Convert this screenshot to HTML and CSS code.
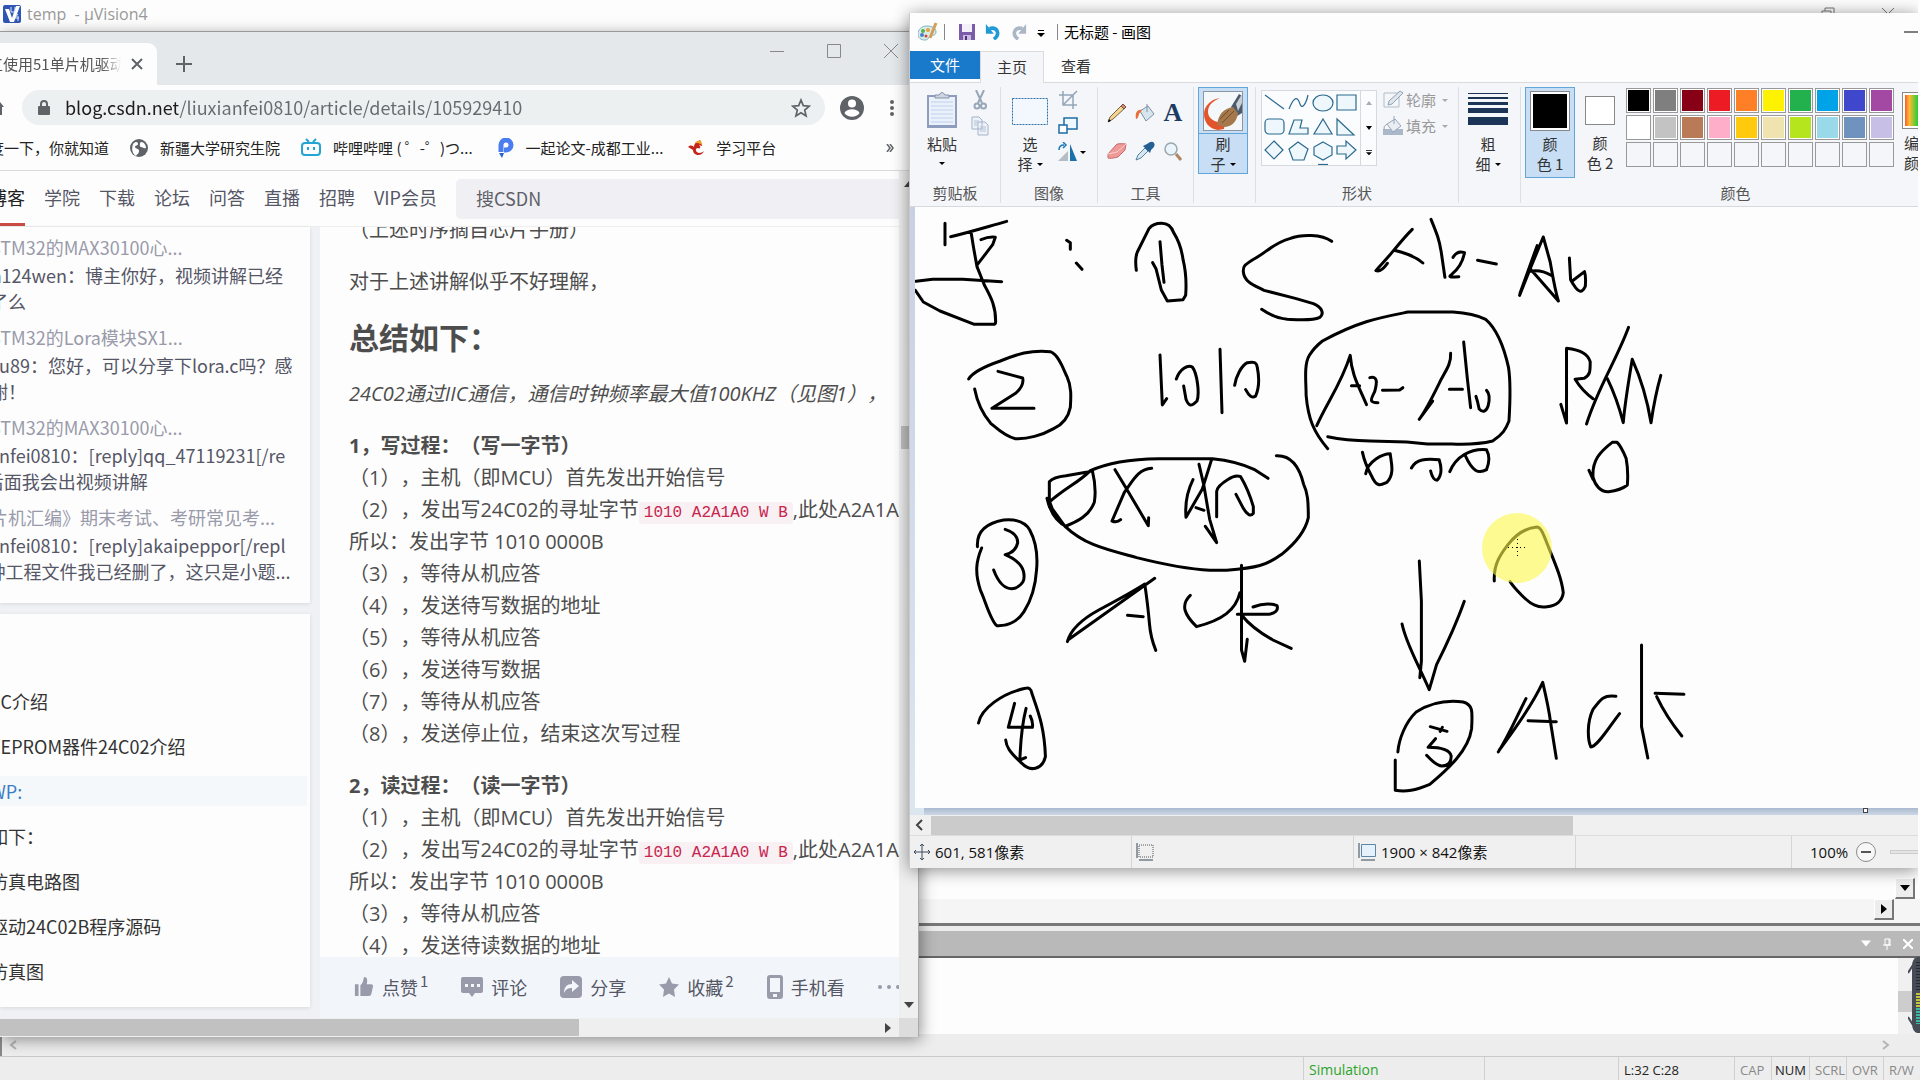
FILE: index.html
```html
<!DOCTYPE html>
<html lang="zh-CN">
<head>
<meta charset="utf-8">
<title>temp - µVision4</title>
<link rel="stylesheet" href="styles.css">
</head>
<body>
<main class="desktop">

<!-- µVision, the maximised window at the back -->
<section class="uv">
  <header class="uv-title">
    <svg class="uv-logo" viewBox="0 0 18 18"><rect width="18" height="18" rx="2" fill="#2f55b5"/><path d="M2 4h4l3 9 4-12h4l-6 16H7z" fill="#fff"/><path d="M8 2v5h4V2M15 9l-3 4h4M15 11v5" fill="none" stroke="#dfe8ff" stroke-width="1"/></svg>
    <h1 class="uv-name">temp &nbsp;- µVision4</h1>
    <span class="uv-controls">
      <svg viewBox="0 0 14 14"><path d="M1 4h9v9H1zM4 4V1h9v9h-3" fill="none" stroke="#777"/></svg>
      <svg viewBox="0 0 14 14"><path d="M1 1l12 12M13 1L1 13" fill="none" stroke="#777"/></svg>
    </span>
  </header>
  <div class="uv-editor">
    <button class="uv-arrow" aria-label="向下滚动"><svg viewBox="0 0 10 6"><path d="M0 0h10L5 6z"/></svg></button>
  </div>
  <div class="uv-hscroll">
    <button class="uv-arrow" aria-label="向右滚动"><svg class="side" viewBox="0 0 6 10"><path d="M0 0v10l6-5z"/></svg></button>
  </div>
  <div class="uv-dock">
    <svg viewBox="0 0 10 6" class="ic-drop"><path d="M0 0h10L5 6z" fill="#fff"/></svg>
    <svg viewBox="0 0 10 12" class="ic-pin"><path d="M3 1h5v6H3zM1 7h8M5 7v5M7 1v6" fill="none" stroke="#fff"/></svg>
    <svg viewBox="0 0 10 10" class="ic-x"><path d="M0 0l10 10M10 0L0 10" stroke="#fff" stroke-width="2"/></svg>
  </div>
  <div class="uv-output"><div class="uv-vscroll"><i></i></div></div>
  <div class="uv-outscroll">
    <svg viewBox="0 0 8 10"><path d="M7 1L2 5l5 4" fill="none" stroke="#b5b5b5" stroke-width="2"/></svg>
    <svg viewBox="0 0 8 10" class="right"><path d="M1 1l5 4-5 4" fill="none" stroke="#b5b5b5" stroke-width="2"/></svg>
  </div>
  <footer class="uv-status">
    <span class="cell sim">Simulation</span><span class="cell blank"></span><span class="cell pos">L:32 C:28</span><span class="cell off">CAP</span><span class="cell num">NUM</span><span class="cell off">SCRL</span><span class="cell off">OVR</span><span class="cell off">R/W</span>
  </footer>
  <svg class="meter" viewBox="0 0 12 76"><path d="M12 0H9Q4 2 4 9v57q0 8 5 10h3z" fill="#474b55"/><path d="M5 8L0 16M5 68L0 60" stroke="#474b55" stroke-width="2"/><path d="M10 5v30" stroke="#262a33" stroke-width="4" stroke-dasharray="1 2"/><path d="M10 36v14" stroke="#c2c43c" stroke-width="4" stroke-dasharray="2 1"/><path d="M10 51v16" stroke="#38b9a0" stroke-width="4" stroke-dasharray="2 1"/></svg>
</section>

<!-- Browser -->
<section class="browser">
  <div class="tabstrip">
    <div class="tab"><span class="tab-title">工使用51单片机驱动</span><button class="plain" aria-label="关闭标签页"><svg class="s12" viewBox="0 0 12 12"><path d="M1 1l10 10M11 1L1 11" stroke="#5f6368" stroke-width="2"/></svg></button></div>
    <button class="plain newtab" aria-label="新标签页"><svg class="s16" viewBox="0 0 16 16"><path d="M8 0v16M0 8h16" stroke="#5f6368" stroke-width="2"/></svg></button>
    <div class="win-controls">
      <button class="plain" aria-label="最小化"><svg class="s14" viewBox="0 0 14 14"><path d="M0 7.5h14" stroke="#888"/></svg></button>
      <button class="plain" aria-label="最大化"><svg class="s14" viewBox="0 0 14 14"><path d="M.5.5h13v13H.5z" fill="none" stroke="#888"/></svg></button>
      <button class="plain" aria-label="关闭"><svg class="s14" viewBox="0 0 14 14"><path d="M0 0l14 14M14 0L0 14" stroke="#888"/></svg></button>
    </div>
  </div>
  <div class="toolbar">
    <svg class="home" viewBox="0 0 4 14"><path d="M0 1l4 5H2v8H0z" fill="#5f6368"/></svg>
    <label class="omnibox">
      <svg class="lock" viewBox="0 0 12 15"><path d="M3 7V4a3 3 0 016 0v3" fill="none" stroke="#5f6368" stroke-width="2"/><rect y="6" width="12" height="9" rx="1" fill="#5f6368"/></svg>
      <input class="url" type="text" aria-label="地址" value="blog.csdn.net/liuxianfei0810/article/details/105929410">
      <svg class="star" viewBox="0 0 20 20"><path d="M10 2l2.3 5.600 6 .5-4.600 4 1.400 5.900L10 14.800 4.900 18l1.400-5.900-4.600-4 6-.5z" fill="none" stroke="#5f6368" stroke-width="1.700"/></svg>
    </label>
    <svg class="avatar" viewBox="0 0 24 24"><circle cx="12" cy="12" r="12" fill="#5f6368"/><circle cx="12" cy="7.500" r="4" fill="#fff"/><path d="M4.500 17c2-5 13-5 15 0-3 5-12 5-15 0z" fill="#fff"/></svg>
    <svg class="dots" viewBox="0 0 4 18"><circle cx="2" cy="3" r="2"/><circle cx="2" cy="9" r="2"/><circle cx="2" cy="15" r="2"/></svg>
  </div>
  <nav class="bookmarks">
    <a href="#b1" class="first">度一下，你就知道</a>
    <a href="#b2"><svg class="s18" viewBox="0 0 18 18"><circle cx="9" cy="9" r="9" fill="#5f6368"/><path d="M3 5c3-3 5-2 5 0s-3 1-3 3 4 1 4 4-2 3-3 5c-3-2-5-6-3-12zM11 3c3 0 5 3 5 6-2 1-3-1-5-1s-1-5 0-5z" fill="#fff"/></svg>新疆大学研究生院</a>
    <a href="#b3" class="cut"><svg class="s20" viewBox="0 0 20 20"><path d="M5 1l3 3M15 1l-3 3" stroke="#23a5d3" stroke-width="2"/><rect x="1" y="5" width="18" height="12" rx="3" fill="none" stroke="#23a5d3" stroke-width="2"/><path d="M7 9v3M13 9v3" stroke="#23a5d3" stroke-width="2"/></svg>哔哩哔哩 (&nbsp;゜-゜)つ...</a>
    <a href="#b4" class="cut"><svg class="p-logo" viewBox="0 0 16 20"><path d="M3 14V7a5 5 0 115 5H6" fill="none" stroke="#4a7df0" stroke-width="5"/><path d="M1 15h5l-2 5z" fill="#2b62cf"/></svg>一起论文-成都工业...</a>
    <a href="#b5"><svg class="s16" viewBox="0 0 16 16"><path d="M0 7c3-3 5-1 6 0 0-4 4-6 6-7-1 3 3 3 2 6l-3-1c3 3 0 4-1 3-3 0-3 4 1 5 2 0 4-1 5-2-2 6-11 5-11-1-2-1-3-2-5-3z" fill="#c5261c"/><path d="M7 3c2-3 4-1 6-3 0 3 2 3 1 5-3-2-4-2-7-2z" fill="#eda72e"/></svg>学习平台</a>
    <button class="plain more" aria-label="更多书签"><svg viewBox="0 0 8 8"><path d="M1 0l3 4-3 4M4 0l3 4-3 4" fill="none" stroke="#5f6368" stroke-width="1.500"/></svg></button>
  </nav>

  <div class="viewport">
    <div class="page">
      <nav class="csdn-nav">
        <a href="#n1" class="on">博客</a><a href="#n2">学院</a><a href="#n3">下载</a><a href="#n4">论坛</a><a href="#n5">问答</a><a href="#n6">直播</a><a href="#n7">招聘</a><a href="#n8">VIP会员</a>
        <input type="text" class="search" aria-label="搜索" placeholder="搜CSDN">
      </nav>
      <div class="columns">
        <aside class="side-col">
          <ul class="card comments">
            <li><a href="#c1">基于STM32的MAX30100心...</a><p>karen124wen：博主你好，视频讲解已经<br>更新了么</p></li>
            <li><a href="#c2">基于STM32的Lora模块SX1...</a><p>xiaoliu89：您好，可以分享下lora.c吗？感<br>激谢谢！</p></li>
            <li><a href="#c3">基于STM32的MAX30100心...</a><p>liuxianfei0810：[reply]qq_47119231[/re<br>ply]后面我会出视频讲解</p></li>
            <li><a href="#c4">《单片机汇编》期末考试、考研常见考...</a><p>liuxianfei0810：[reply]akaipeppor[/repl<br>y]一种工程文件我已经删了，这只是小题...</p></li>
          </ul>
          <ul class="card toc">
            <li><a href="#t1">一、IIC介绍</a></li>
            <li><a href="#t2">二、EEPROM器件24C02介绍</a></li>
            <li class="active"><a href="#t3">三、WP:</a></li>
            <li><a href="#t4">总结如下：</a></li>
            <li><a href="#t5">四、仿真电路图</a></li>
            <li><a href="#t6">五、驱动24C02B程序源码</a></li>
            <li><a href="#t7">六、仿真图</a></li>
          </ul>
        </aside>
        <div class="main-col">
          <article class="article">
            <p>（上述时序摘自芯片手册）</p>
            <p>对于上述讲解似乎不好理解，</p>
            <h2>总结如下：</h2>
            <p><em>24C02通过IIC通信，通信时钟频率最大值100KHZ（见图1），</em></p>
            <p><strong>1，写过程：（写一字节）</strong><br>（1），主机（即MCU）首先发出开始信号<br>（2），发出写24C02的寻址字节<code>1010 A2A1A0 W B</code>,此处A2A1A0<br>所以：发出字节 1010 0000B<br>（3），等待从机应答<br>（4），发送待写数据的地址<br>（5），等待从机应答<br>（6），发送待写数据<br>（7），等待从机应答<br>（8），发送停止位，结束这次写过程</p>
            <p><strong>2，读过程：（读一字节）</strong><br>（1），主机（即MCU）首先发出开始信号<br>（2），发出写24C02的寻址字节<code>1010 A2A1A0 W B</code>,此处A2A1A0<br>所以：发出字节 1010 0000B<br>（3），等待从机应答<br>（4），发送待读数据的地址</p>
          </article>
          <div class="actions">
            <button class="plain"><svg viewBox="0 0 20 22" class="s20"><path d="M0 8h4v13H0zM6 9c3-2 3-5 4-9 4 0 4 4 3 8h5q2 0 2 2l-2 9q0 2-3 2H6z"/></svg>点赞<sup>1</sup></button>
            <button class="plain"><svg viewBox="0 0 22 20" class="s22"><path d="M2 0h18q2 0 2 2v12q0 2-2 2h-6l-3 4-3-4H2q-2 0-2-2V2q0-2 2-2z"/><path d="M4 7h3v3H4zM10 7h3v3h-3zM16 7h3v3h-3z" fill="#f3f6fa"/></svg>评论</button>
            <button class="plain"><svg viewBox="0 0 22 22" class="s22"><rect width="22" height="22" rx="4"/><path d="M4 17c0-6 3-9 8-9V4l7 6-7 6v-4c-4 0-6 1-8 5z" fill="#f3f6fa"/></svg>分享</button>
            <button class="plain"><svg viewBox="0 0 20 20" class="s20"><path d="M10 0l3 6.500 7 1-5 5 1 7.500-6-3.500L4 20l1-7.500-5-5 7-1z"/></svg>收藏<sup>2</sup></button>
            <button class="plain"><svg viewBox="0 0 16 24" class="phone"><path fill-rule="evenodd" d="M3 0h10q3 0 3 3v18q0 3-3 3H3q-3 0-3-3V3q0-3 3-3zM3 3v14h10V3zM6 19v3h4v-3z"/></svg>手机看</button>
            <button class="plain" aria-label="更多"><svg viewBox="0 0 22 4" class="dots3"><circle cx="2" cy="2" r="2"/><circle cx="11" cy="2" r="2"/><circle cx="20" cy="2" r="2"/></svg></button>
          </div>
        </div>
      </div>
    </div>
    <div class="vbar"><svg viewBox="0 0 10 6"><path d="M0 6h10L5 0z"/></svg><i></i><svg viewBox="0 0 10 6"><path d="M0 0h10L5 6z"/></svg></div>
    <div class="hbar"><i></i><svg viewBox="0 0 6 10"><path d="M0 0v10l6-5z"/></svg></div>
    <div class="corner"></div>
  </div>
</section>

<!-- Paint -->
<section class="paint">
  <header class="p-title">
    <svg class="s20" viewBox="0 0 20 20"><path d="M9 4C3 4 0 8 0 12s3 6 7 6 3-3 5-4 6 0 6-4-4-6-9-6z" fill="#d9ecec" stroke="#7fb4bd"/><circle cx="5" cy="9" r="2" fill="#5cae4b"/><circle cx="10" cy="8" r="2" fill="#e8a13c"/><circle cx="4" cy="13" r="2" fill="#4a7fd0"/><circle cx="8" cy="14" r="1.500" fill="#d3452f"/><path d="M18 1L12 16" stroke="#d3a059" stroke-width="3"/></svg>
    <i class="bar"></i>
    <svg class="s16 save" viewBox="0 0 16 16"><path d="M0 0h16v16H0z" fill="#7a5ca8"/><path d="M3 0h10v8H3z" fill="#f3f0fa"/><path d="M4 11h8v5H4z" fill="#c9bce0"/><path d="M6 12h2v4H6z" fill="#4b3477"/></svg>
    <svg class="s16" viewBox="0 0 16 18"><path d="M4 5c10-2 12 7 5 12" fill="none" stroke="#1f9ad6" stroke-width="4"/><path d="M0 0v11h9z" fill="#1f9ad6"/></svg>
    <svg class="s16" viewBox="0 0 16 18"><path d="M12 5C2 3 0 12 7 17" fill="none" stroke="#a9b7c6" stroke-width="4"/><path d="M16 0v11H7z" fill="#a9b7c6"/></svg>
    <svg class="qat" viewBox="0 0 8 7"><path d="M1 0h6v1H1zM0 3h8L4 7z"/></svg>
    <i class="bar"></i>
    <span class="p-name">无标题 - 画图</span>
    <button class="plain min" aria-label="最小化"><svg viewBox="0 0 14 2"><path d="M0 1h14" stroke="#000"/></svg></button>
  </header>
  <nav class="p-tabs"><button class="file">文件</button><button class="cur">主页</button><button>查看</button></nav>
  <div class="ribbon">
    <div class="group g-clip">
      <div class="g-body">
        <button class="tall"><svg class="i30x40" viewBox="0 0 30 40"><path d="M0 4h30v33H0z" fill="#8e9dbd"/><path d="M2 6h26v28H2z" fill="#eaf1fb"/><path d="M8 7V4h4q3-5 6 0h4v3z" fill="#cfd5df" stroke="#8391ab"/><path d="M4 11h22M4 15h22M4 19h22M4 23h22M4 27h22M4 31h22" stroke="#bfd0ec"/></svg><span>粘贴</span><svg class="dn" viewBox="0 0 6 3"><path d="M0 0h6L3 3z"/></svg></button>
        <div class="stack">
          <button class="plain" aria-label="剪切"><svg class="s20" viewBox="0 0 20 20"><path d="M6 0l6 13M14 0L8 13" stroke="#98a6ba" stroke-width="2"/><circle cx="7" cy="16" r="2.500" fill="none" stroke="#98a6ba" stroke-width="2"/><circle cx="13.500" cy="16" r="2.500" fill="none" stroke="#98a6ba" stroke-width="2"/></svg></button>
          <button class="plain" aria-label="复制"><svg class="s20" viewBox="0 0 20 20"><path d="M2 1h7l3 3v9H2zM8 6h7l3 3v10H8z" fill="#eef2f8" stroke="#a5b3c9"/><path d="M4 5h5M4 7h4M4 9h3M10 11h6M10 13h6M10 15h6" stroke="#b6c2d6"/></svg></button>
        </div>
      </div>
      <div class="g-label">剪贴板</div>
    </div>
    <div class="group g-image">
      <div class="g-body">
        <button class="tall"><svg class="i36x40" viewBox="0 0 36 40"><rect x=".5" y="7.500" width="35" height="26" fill="#f2f8fd" stroke="#2a6fa8" stroke-dasharray="2 1"/></svg><span>选<br>择<svg class="dn" viewBox="0 0 6 3"><path d="M0 0h6L3 3z"/></svg></span></button>
        <div class="stack wide">
          <button class="plain" aria-label="裁剪"><svg class="s20" viewBox="0 0 20 20"><path d="M5 1v14h14M1 5h14v14M5 15L19 1" fill="none" stroke="#93a5b9" stroke-width="1.500"/></svg></button>
          <button class="plain" aria-label="重新调整大小"><svg class="s20" viewBox="0 0 20 20"><path d="M6 2h13v11H6z" fill="#f0f9ff" stroke="#1c6da3" stroke-width="1.500"/><path d="M1 9h8v8H1z" fill="#fff" stroke="#1c6da3" stroke-width="1.500"/></svg></button>
          <button class="plain" aria-label="旋转"><svg class="i28x20" viewBox="0 0 28 20"><path d="M12 2v17h7z" fill="#1a70ab"/><path d="M10 9v10H0z" fill="#b4bcc5"/><path d="M1 8q0-5 5-5M5 0l3 3-3 3" fill="none" stroke="#1a78b8" stroke-width="1.500"/><path d="M22 9h6l-3 3z"/></svg></button>
        </div>
      </div>
      <div class="g-label">图像</div>
    </div>
    <div class="group g-tools">
      <div class="g-body tools">
        <button class="plain" aria-label="铅笔"><svg class="s20" viewBox="0 0 20 20"><path d="M1 19l2-5L15 2l3 3L6 16z" fill="#f3d68b" stroke="#77624a"/><path d="M14 3l2-2 3 3-2 2z" fill="#d98a70" stroke="#705040"/><path d="M1 19l1-3 2 2z"/></svg></button>
        <button class="plain" aria-label="填充"><svg class="s20" viewBox="0 0 20 20"><path d="M5 8l8-5 6 8-8 7z" fill="#d7e5ef" stroke="#7d92a4"/><path d="M12 1v8" stroke="#7d92a4"/><path d="M7 7C2 6 0 10 1 16q2 0 3-5z" fill="#e6703a"/></svg></button>
        <button class="plain letter" aria-label="文本">A</button>
        <button class="plain" aria-label="橡皮擦"><svg class="s20" viewBox="0 0 20 20"><path d="M1 13L9 4q1-2 10-1l-1 6-7 7q-8 2-10 1z" fill="#ef9a98" stroke="#c76b6b"/><path d="M1 13l9-2 9-8" fill="none" stroke="#fbd0cc"/></svg></button>
        <button class="plain" aria-label="颜色选取器"><svg class="s20" viewBox="0 0 20 20"><path d="M1 19l2-5 7-7 3 3-7 7z" fill="#d7e7f2" stroke="#59819b"/><path d="M8 5l7 7 1-3q5-4 3-7t-7 1z" fill="#245f94"/></svg></button>
        <button class="plain" aria-label="放大镜"><svg class="s20" viewBox="0 0 20 20"><circle cx="8" cy="8" r="6" fill="#eaf4fb" stroke="#9ba6af" stroke-width="1.500"/><path d="M13 13l5 6" stroke="#b08562" stroke-width="3"/></svg></button>
      </div>
      <div class="g-label">工具</div>
    </div>
    <div class="group g-brush">
      <div class="g-body"><button class="tall pressed split"><svg class="i40x40" viewBox="0 0 40 40"><rect x=".5" y=".5" width="39" height="39" fill="#f5f8fa" stroke="#8a97a5"/><path d="M17 7C8 8 1 15 1 23c0 8 5 15 14 16l6-1 1-7c-6 2-17-2-17-10C5 14 10 10 17 7z" fill="#e2552c"/><path d="M28 16l8-13 3 2v17l-5 3z" fill="#4d5a6c"/><path d="M33 13l6-10v9l-4 8z" fill="#c7ced6"/><path d="M14 34q2-16 16-18l5 6q-2 13-13 14z" fill="#a4784a"/><path d="M19 32l12-12M17 28l9-9" stroke="#70502f"/></svg><span>刷<br>子<svg class="dn" viewBox="0 0 6 3"><path d="M0 0h6L3 3z"/></svg></span></button></div>
      <div class="g-label"></div>
    </div>
    <div class="group g-shapes">
      <div class="g-body">
        <div class="gallery">
          <svg class="shapes" viewBox="0 0 98 74" fill="#eef7fc" stroke="#2b6a8e" stroke-width="1.200"><path d="M3 4l19 14"/><path fill="none" d="M27 18c6-15 9-11 11-5s6 0 8-9"/><ellipse cx="61" cy="12" rx="10" ry="8"/><path d="M75 4h19v15H75z"/><rect x="3" y="28" width="19" height="15" rx="4"/><path d="M27 43l5-14h8l-2 8h8v6z"/><path d="M61 28l9 15H52z"/><path d="M75 28l17 16H75z"/><path d="M12 50l9 9-9 9-9-9z"/><path d="M36 51l10 7-4 11H31l-4-11z"/><path d="M61 51l9 5v8l-9 5-9-5v-8z"/><path d="M75 55h9v-5l10 9-10 9v-5h-9z"/><path d="M56 73.500h10"/></svg>
          <div class="g-scroll"><svg viewBox="0 0 6 4"><path d="M0 4h6L3 0z" fill="#a8adb3"/></svg><svg viewBox="0 0 6 4"><path d="M0 0h6L3 4z"/></svg><svg viewBox="0 0 8 8"><path d="M0 0h8v1H0zM0 3h8L4 7z"/></svg></div>
        </div>
        <div class="stack opts">
          <button class="plain"><svg class="s20" viewBox="0 0 20 20"><path d="M1 3h15v14H1z" fill="none" stroke="#b3bdc9"/><path d="M5 15l1-4L17 1l3 2L9 14z" fill="#dfe5ec" stroke="#93a1b1"/></svg>轮廓<svg class="dn" viewBox="0 0 6 3"><path d="M0 0h6L3 3z"/></svg></button>
          <button class="plain"><svg class="s20" viewBox="0 0 20 20"><path d="M0 13h20v6H0z" fill="#aab8ca"/><path d="M4 8l8-5 6 7-8 6z" fill="#e9eef4" stroke="#97a6b8"/><path d="M11 0v8M4 8q-4 2-3 6" fill="none" stroke="#97a6b8"/></svg>填充<svg class="dn" viewBox="0 0 6 3"><path d="M0 0h6L3 3z"/></svg></button>
        </div>
      </div>
      <div class="g-label">形状</div>
    </div>
    <div class="group g-size">
      <div class="g-body"><button class="tall"><svg class="i40x40" viewBox="0 0 40 40"><path d="M0 2h40v1H0zM0 6h40v2H0zM0 11h40v3H0zM0 17h40v5H0zM0 26h40v8H0z" fill="#1c3557"/></svg><span>粗<br>细<svg class="dn" viewBox="0 0 6 3"><path d="M0 0h6L3 3z"/></svg></span></button></div>
      <div class="g-label"></div>
    </div>
    <div class="group g-colors">
      <div class="g-body">
        <button class="tall pressed"><i class="chip big"></i><span>颜<br>色 1</span></button>
        <button class="tall second"><i class="chip small"></i><span>颜<br>色 2</span></button>
        <div class="palette">
          <button class="k" aria-label="黑色"></button><button class="gray50" aria-label="灰色"></button><button class="darkred" aria-label="深红"></button><button class="red" aria-label="红"></button><button class="orange" aria-label="橙"></button><button class="yellow" aria-label="黄"></button><button class="green" aria-label="绿"></button><button class="turq" aria-label="青绿"></button><button class="indigo" aria-label="靛蓝"></button><button class="purple" aria-label="紫"></button>
          <button class="w" aria-label="白色"></button><button class="gray25" aria-label="浅灰"></button><button class="brown" aria-label="褐"></button><button class="rose" aria-label="玫瑰"></button><button class="gold" aria-label="金"></button><button class="cream" aria-label="浅黄"></button><button class="lime" aria-label="酸橙"></button><button class="sky" aria-label="淡青绿"></button><button class="steel" aria-label="蓝灰"></button><button class="lavender" aria-label="淡紫"></button>
          <button class="empty" aria-label="空"></button><button class="empty" aria-label="空"></button><button class="empty" aria-label="空"></button><button class="empty" aria-label="空"></button><button class="empty" aria-label="空"></button><button class="empty" aria-label="空"></button><button class="empty" aria-label="空"></button><button class="empty" aria-label="空"></button><button class="empty" aria-label="空"></button><button class="empty" aria-label="空"></button>
        </div>
        <button class="tall edit"><i class="chip rainbow"></i><span>编辑<br>颜色</span></button>
      </div>
      <div class="g-label">颜色</div>
    </div>
  </div>

  <div class="work">
    <div class="canvas">
      <svg class="ink" viewBox="915 207 1003 601">
        <g transform="translate(910 205) scale(.33333)">
          <path d="M105 55v64M122 95c60-14 110-30 168-46M183 80l8 50 10 55 22 55c22 40 34 65 34 110q0 8-8 8H193L90 318 40 291 16 256M213 104q25-10 43-7l-8 22-46 60M18 229l50-6h90l117 7M470 106l11 7v20M499 174l17 19"/>
          <path d="M679 196q-5-35 3-55l35-70q12-16 38-16t36 28q22 35 28 80c10 40 10 80 8 108l-8 13-47 4-18-33-16-64-10-18M750 110l6 70 6 52M1265 109c-30-22-90-22-126-8-50 14-70 42-112 64-25 16-28 20-27 35 2 32 35 42 62 56l94 24 54 16c25 10 35 30 18 42-20 10-70 6-96 5-25-2-55-15-77-30"/>
          <path d="M176 522c15-25 60-42 95-54 50-20 90-34 150-28 25 8 40 55 50 75 14 30 12 60 10 92-6 30-20 50-50 64-35 20-80 32-115 30-30-6-55-30-74-46-25-30-40-60-48-103M264 499l74 20q5 22-20 45l-72 46h126M750 450l7 150 13-19M799 522c10-30 35-44 48-36 15 20 22 80 14 102-18 18-25 16-33-5l-7-40M930 433l6 190M974 541c5-30 20-58 38-68 22-4 28 0 30 15 6 30 6 60-5 85-10 8-20 0-30-19"/>
          <path d="M547 797c10 40 10 70 6 95-15 40-50 58-88 72l-38-52-9-24M418 905v-75q12-14 50-18l60-10 20-5M416 893c50-45 90-60 125-96M541 797c60-28 140-35 206-36h160c60 6 100 20 125 32l42 27M465 964c60 56 120 68 215 94 80 20 150 34 220 38h50c90-8 120-15 165-48 40-32 70-65 80-110 0-50-2-75-14-100-12-50-36-88-82-86M411 880q15 65 60 86M615 794l30 50 70 118 1-24M725 790c-40 2-55 35-82 72l-37 86q15 6 26-4M849 824c-15 30-25 65-21 113l49-85 27-86M867 778l14 60 18 105 21 70-34-49M858 908l24 8M920 935v-76q2-16 35-36 20-14 37-8 24 40 38 90v20q-12 15-30-15l-22-42"/>
        </g>
        <g transform="translate(1280 205) scale(.40816 .33333)">
          <path d="M324 73q-18 22-46 64c-20 30-30 40-43 60q12 6 28-22M280 136q48 14 70 38M370 43c15 45 20 60 25 98l9 76M424 157q10-22 28-14c-4 28-14 48-32 66-10 8 0 8 18 6M484 166l46 11M587 271l26-80 32-95 17 75c8 55 12 85 20 117l-32-45-36-50M588 265l42-143M612 199q28-6 52 12M709 159l3 65c20 45 28 40 36 20q2-30-2-44l-30 28"/>
          <path d="M117 731c-35-50-48-90-53-160 0-40-6-92 8-120q12-24 32-43c90-60 140-70 210-87h110q50 4 80 22c30 32 45 84 56 145 6 50 4 100 1 160-8 25-15 40-40 60q-40 12-100 9h-60l-50-6-90-3q-60-2-104-13M90 662c25-70 60-125 82-211 4 60 20 90 40 148M175 542h20M220 518c20-6 18 15 12 42-12 28-12 32 8 33M251 556l42-1 8-7M418 445c2 35-16 58-28 90-16 40-32 80-49 108l33-55M450 411l9 110 8 87M415 553h32M480 574q4 14 8 38 14 18 22-10c4-20 4-36-4-46"/>
          <path d="M688 598l14 56V430c38 6 52 18 58 40 0 30 0 40-15 50l-22 3q18 36 44 58M854 367c-30 100-75 180-103 290M802 521c20 50 30 90 39 132 4-60 14-130 22-190 24 65 38 130 46 190 6-50 12-90 24-142"/>
          <path d="M202 742q6 34 22 70c14 40 26 26 38 20 20-26 10-60 8-86-18 0-55 22-60 60M322 789c12-28 35-28 68-25 8 30 4 50-5 62-8 0-12-8-16-28M416 800c15-45 50-70 90-66 8 18 6 42 0 60-20 14-35 4-52-42M757 796l10 27M814 712c-30 28-50 55-47 105 5 24 18 44 38 43q30-4 46-20c2-30 0-60-3-80q-12-36-22-48z"/>
          <path d="M525 1128c-2-50 15-80 34-110 25-38 50-50 70-52 10 0 16 20 27 55 20 60 34 100 38 142-2 25-18 40-40 42-22 4-38-5-60-32q-24-30-30-43"/>
        </g>
        <g transform="translate(910 500) scale(.52290 .33333)">
          <path d="M129 140c-2-45 15-70 50-80 28-4 42 8 50 30 12 35 16 70 13 120-2 50-10 90-24 125-10 25-28 44-52 42-12-15-22-75-31-105-12-55-8-90 2-128M182 88q24 12 24 40-4 30-24 36 30 20 35 50c4 28-2 40-15 50-20 10-34-20-42-54M301 425c5-30 25-65 60-95 30-25 60-50 88-78q6 65 9 120 2 40 12 79M302 420l166-185M416 346l30 4M536 286c-20 30-10 60 12 94 50-20 75-50 83-102M634 196v254l6 34 5-66M626 343h60q20-5 16-26-20-12-46 4M634 345q20 40 60 75l35 25"/>
          <path d="M131 669c5-42 45-90 90-104q10-4 12 15c12 55 24 100 26 190-6 40-30 46-45 20-24-35-30-50-31-70M200 610l-12 72h46q2-14-4-34M222 625c-10 60-10 100-12 155l11-7M974 183l4 120v180l-3 50M941 372c8 60 28 110 52 197l14-75q16-50 30-100 14-50 23-90"/>
          <path d="M933 756c2-40 15-90 35-120 30-30 60-36 90-30 18 8 18 25 16 80-6 65-44 120-80 167-28 18-45 24-66 18V780M995 680l32 14M1018 682l-4 12M1005 716l-14 26q40 0 44 26 0 30-18 30-10 0-29-32M1125 756c20-50 35-105 53-160M1127 750q60-125 83-203 12 80 15 120l11 108M1182 662l54 3M1350 589c-24-6-30 10-44 40-12 40-10 90-4 112 12 0 35-60 55-100M1399 435v245l12 94M1425 580l55 3M1428 590q18 60 48 118"/>
        </g>
        <circle class="spot" cx="1517" cy="548" r="35"/>
        <path class="cross" d="M1508 547.500h18M1517.500 539v18"/>
      </svg>
    </div>
    <div class="c-shadow"><i></i></div>
  </div>
  <div class="p-scroll"><svg viewBox="0 0 8 12"><path d="M7 1L2 6l5 5" fill="none" stroke="#444" stroke-width="2"/></svg><i></i></div>
  <footer class="p-status">
    <span class="st wide"><svg class="s16" viewBox="0 0 16 16"><path d="M8 0v16M0 8h16M6 2l2-2 2 2M6 14l2 2 2-2M2 6L0 8l2 2M14 6l2 2-2 2" fill="none" stroke="#3b4a5a"/></svg>601, 581像素</span>
    <span class="st"><svg class="s18" viewBox="0 0 18 18"><path d="M3 2h14v12H3z" fill="none" stroke="#555" stroke-dasharray="1 1"/><path d="M1 0v15M3 17h14" stroke="#345"/></svg></span>
    <span class="st"><svg class="s18" viewBox="0 0 18 18"><path d="M3.500 1.500h14v12h-14z" fill="#e5f2fb" stroke="#5f87a5"/><path d="M1 0v15M3 17h14" stroke="#345"/></svg>1900 × 842像素</span>
    <span class="st"></span>
    <span class="st zoom">100%<svg class="s20" viewBox="0 0 20 20"><circle cx="10" cy="10" r="9.500" fill="#f7f7f7" stroke="#8b8b8b"/><path d="M5 10h10" stroke="#555" stroke-width="2"/></svg><input type="range" class="slider" aria-label="缩放" value="60"></span>
  </footer>
</section>
</main>
</body>
</html>
```
FILE: styles.css
```css
* { box-sizing: border-box; }
body {
  margin: 0;
  font: 15px/20px "Noto Sans CJK SC", sans-serif;
  color: #222;
  text-spacing-trim: space-all;
}
button, input { font: inherit; color: inherit; margin: 0; }
button { padding: 0; cursor: pointer; }
ul { list-style: none; margin: 0; padding: 0; }
a { color: inherit; text-decoration: none; }
svg { display: block; flex: none; }
.plain { border: 0; background: none; }
.s12 { width: 12px; height: 12px; }
.s14 { width: 14px; height: 14px; }
.s16 { width: 16px; height: 16px; }
.s18 { width: 18px; height: 18px; }
.s20 { width: 20px; height: 20px; }
.s22 { width: 22px; height: 22px; }

.desktop { position: relative; height: 100vh; overflow: hidden; background: #ededed; }

/* µVision */
.uv { height: 100%; display: flex; flex-direction: column; }
.uv-title { height: 31px; flex: none; display: flex; align-items: center; padding: 0 25px 3px 3px; gap: 6px; background: #fdfdfd; color: #999; }
.uv-logo { width: 18px; height: 18px; }
.uv-name { margin: 0; font: 16px/20px "Open Sans", "Noto Sans CJK SC", sans-serif; }
.uv-controls { margin-left: auto; display: flex; gap: 46px; }
.uv-controls svg { width: 14px; height: 14px; }
.uv-editor { flex: 1; background: #fdfdfd; display: flex; justify-content: flex-end; align-items: flex-end; padding: 0 5px 0 0; }
.uv-arrow { width: 20px; height: 21px; display: grid; place-items: center; border: 1px solid #fff; border-right: 2px solid #777; border-bottom: 2px solid #777; background: #ededed; }
.uv-arrow svg { width: 10px; height: 6px; }
.uv-arrow .side { width: 6px; height: 10px; }
.uv-hscroll { height: 27px; flex: none; background: #f5f5f5; border-bottom: 3px solid #777; display: flex; justify-content: flex-end; padding-right: 26px; }
.uv-dock { height: 32px; flex: none; border-top: 5px solid #ececec; border-bottom: 2px solid #666; background: #b9b9b9; display: flex; justify-content: flex-end; align-items: center; gap: 11px; padding-right: 7px; }
.ic-drop { width: 10px; height: 7px; }
.ic-pin { width: 10px; height: 12px; }
.ic-x { width: 10px; height: 10px; }
.uv-output { height: 76px; flex: none; background: #fdfdfd; display: flex; justify-content: flex-end; }
.uv-vscroll { width: 22px; background: #f0f0f0; padding-top: 33px; }
.uv-vscroll i { display: block; height: 21px; background: #cdcdcd; }
.uv-outscroll { height: 22px; flex: none; display: flex; justify-content: space-between; align-items: center; padding: 0 30px 0 7px; border-left: 2px solid #888; background: #ededed; }
.uv-outscroll svg { width: 8px; height: 10px; }
.uv-status { height: 24px; flex: none; display: flex; justify-content: flex-end; border-top: 1px solid #c9c9c9; font: 14px/26px "Open Sans", sans-serif; }
.cell { border-left: 1px solid #d0d0d0; padding-left: 5px; overflow: hidden; width: 38px; font-size: 13px; white-space: nowrap; }
.cell.sim { width: 181px; color: #2aa52a; font-size: 14px; }
.cell.blank { width: 134px; }
.cell.pos { width: 116px; }
.cell.num { padding-left: 3px; }
.cell.off { width: 37px; color: #888; }
.meter { position: absolute; right: 0; bottom: 47px; width: 12px; height: 76px; }

/* Browser */
.browser { position: absolute; left: 0; top: 31px; bottom: 43px; width: calc(50% - 41px); display: flex; flex-direction: column; background: #fdfdfd; border-top: 1px solid #999; border-right: 1px solid #aaa; box-shadow: 2px 3px 14px rgba(0,0,0,.4); }
.tabstrip { height: 53px; flex: none; display: flex; background: #e4e8eb; }
.tab { width: 157px; margin-top: 11px; padding-right: 14px; display: flex; align-items: center; justify-content: space-between; background: #fdfdfd; border-top-right-radius: 9px; color: #555; }
.tab-title { width: 121px; height: 20px; overflow: hidden; white-space: nowrap; text-indent: -12px; -webkit-mask-image: linear-gradient(90deg, #000 85%, transparent); mask-image: linear-gradient(90deg, #000 85%, transparent); }
.newtab { margin: 11px 0 0 19px; }
.win-controls { margin: 0 20px 0 auto; display: flex; gap: 43px; align-items: flex-start; padding-top: 12px; }
.toolbar { height: 45px; flex: none; display: flex; align-items: center; padding-right: 24px; }
.home { width: 4px; height: 14px; margin-right: 18px; }
.omnibox { flex: 1; height: 35px; display: flex; align-items: center; gap: 15px; padding: 0 14px 0 16px; background: #edf0f1; border-radius: 18px; }
.lock { width: 12px; height: 15px; }
.url { flex: 1; min-width: 0; border: 0; outline: 0; padding: 0 0 2px; height: 30px; font: 18px/28px "Noto Sans CJK SC", sans-serif; color: transparent; background: linear-gradient(90deg, #1c1c1c 0 113px, #666a6d 113px) text; -webkit-background-clip: text; }
.star { width: 20px; height: 20px; }
.avatar { width: 24px; height: 24px; margin: 0 26px 0 15px; }
.dots { width: 4px; height: 18px; fill: #5f6368; }
.bookmarks { height: 41px; flex: none; display: flex; align-items: center; padding: 0 24px 4px 0; border-bottom: 1px solid #d8dadc; white-space: nowrap; }
.bookmarks a { display: flex; align-items: center; gap: 12px; margin-right: 21px; }
.bookmarks .cut { margin-right: 25px; }
.bookmarks .first { margin-left: -11px; }
.p-logo { width: 16px; height: 20px; }
.more { margin-left: auto; }
.more svg { width: 8px; height: 8px; }

.viewport { flex: 1; min-height: 0; display: grid; grid-template: minmax(0,1fr) 19px / minmax(0,1fr) 19px; }
.page { display: flex; flex-direction: column; overflow: hidden; min-height: 0; background: #eff1f4; color: #555666; }
.csdn-nav { height: 56px; flex: none; display: flex; align-items: stretch; gap: 19px; background: #fdfdfd; border-bottom: 1px solid #eee; font-size: 18px; line-height: 52px; white-space: nowrap; }
.csdn-nav a { flex: none; }
.csdn-nav .on { margin-left: -11px; color: #222; border-bottom: 3px solid #ca4b44; }
.search { flex: 1; min-width: 0; height: 40px; margin-top: 8px; padding: 0 20px 2px; border: 0; border-radius: 5px 0 0 5px; background: #efeff4; }
.search::placeholder { color: #606068; opacity: 1; }
.columns { flex: 1; min-height: 0; display: flex; gap: 10px; }
.side-col { width: 310px; flex: none; display: flex; flex-direction: column; gap: 11px; font-size: 18px; white-space: nowrap; }
.card { background: #fdfdfd; box-shadow: 0 1px 4px rgba(0,0,0,.1); }
.comments { padding: 5px 0 11px; height: 376px; overflow: hidden; display: flex; flex-direction: column; gap: 8px; }
.comments li, .toc a { margin-left: -46px; }
.comments a { display: block; line-height: 30px; color: #999aaa; }
.comments p { margin: 0; line-height: 26px; }
.toc { padding: 72px 3px 21px 0; overflow: hidden; display: flex; flex-direction: column; gap: 15px; line-height: 30px; color: #333; }
.toc .active { background: #f5f8fa; color: #3c7dc4; }
.main-col { flex: 1; min-width: 0; display: flex; flex-direction: column; background: #fdfdfd; }
.article { flex: 1; min-height: 0; overflow: hidden; padding-left: 29px; font-family: "Open Sans", "Noto Sans CJK SC", sans-serif; font-size: 20px; line-height: 32px; color: #4d4d4d; white-space: nowrap; }
.article p { margin: 0 0 20px; }
.article p:first-child { margin-top: -13px; }
.article h2 { margin: 0 0 20px; font-size: 30px; line-height: 40px; }
.article code { font: 16px/24px "Liberation Mono", monospace; color: #c7254e; background: #f9f0f3; padding: 2px 5px; border-radius: 3px; }
.actions { height: 61px; flex: none; display: flex; align-items: center; gap: 33px; padding: 0 0 2px 34px; background: #f2f6fa; font-size: 18px; white-space: nowrap; overflow: hidden; }
.actions button { display: flex; align-items: center; gap: 8px; }
.actions svg { fill: #999aaa; }
.actions sup { font-size: 15px; line-height: 15px; margin: 0 0 12px -6px; }
.phone { width: 16px; height: 24px; }
.dots3 { width: 22px; height: 4px; }
.vbar { background: #efefef; display: flex; flex-direction: column; align-items: center; padding: 10px 0; }
.vbar svg { width: 10px; height: 6px; fill: #444; }
.vbar i { width: 16px; height: 23px; margin: 239px 0 auto; background: #c1c1c1; }
.hbar { background: #efefef; display: flex; align-items: center; justify-content: space-between; padding-right: 8px; }
.hbar i { width: 65%; height: 17px; background: #c1c1c1; }
.hbar svg { width: 6px; height: 10px; fill: #444; }
.corner { background: #dcdcdc; }

/* Paint */
.paint { position: absolute; left: calc(50% - 51px); right: 2px; top: 13px; bottom: 212px; display: flex; flex-direction: column; border-left: 1px solid #c9c9c9; background: #fdfdfd; box-shadow: 0 2px 16px rgba(0,0,0,.45); overflow: hidden; clip-path: inset(-20px 0 -30px -20px); }
.p-title { height: 38px; flex: none; display: flex; align-items: center; padding-left: 8px; color: #000; }
.bar { width: 1px; height: 16px; background: #888; margin: 0 6px; }
.p-title .save { margin-left: 8px; }
.p-title .s16 + .s16 { margin-left: 10px; }
.qat { width: 8px; height: 7px; margin: 2px 6px 0 10px; }
.min { margin-left: auto; }
.min svg { width: 14px; height: 2px; }
.p-tabs { height: 31px; flex: none; display: flex; }
.p-tabs button { width: 64px; padding-bottom: 2px; border: 0; background: none; color: #333; }
.p-tabs .file { width: 70px; height: 28px; padding: 0; background: #1979ca; color: #fff; }
.p-tabs .cur { border: 1px solid #dadbdc; border-bottom: 0; background: #f4f6f9; position: relative; margin-bottom: -1px; z-index: 1; }
.ribbon { height: 125px; flex: none; display: flex; background: #f4f6f9; border-top: 1px solid #dadbdc; border-bottom: 1px solid #d6dade; padding: 4px 0 3px; color: #333; }
.group { flex: none; display: flex; flex-direction: column; border-right: 1px solid #dcdfe3; }
.g-body { flex: 1; display: flex; align-items: flex-start; }
.g-label { height: 20px; text-align: center; color: #555; }
.tall { display: flex; flex-direction: column; align-items: center; width: 50px; height: 87px; padding-top: 3px; border: 1px solid transparent; background: none; line-height: 20px; }
.tall span { margin-top: 3px; display: block; }
.tall > .dn { display: block; margin: 8px auto 0; }
.dn { display: inline-block; width: 6px; height: 3px; margin: 0 0 4px 4px; }
.pressed { background: #c7def5; border-color: #62a6d8; }
.split span { width: 48px; border-top: 1px solid #62a6d8; margin-top: 2px; }
.i30x40 { width: 30px; height: 40px; }
.i36x40 { width: 36px; height: 40px; }
.i40x40 { width: 40px; height: 40px; }
.i28x20 { width: 28px; height: 20px; }
.stack { display: flex; flex-direction: column; gap: 6px; padding-top: 3px; }
.g-clip { width: 91px; }
.g-clip .g-body { padding-left: 7px; gap: 3px; }
.g-image { width: 97px; }
.g-image .g-body { padding-left: 4px; gap: 3px; }
.g-tools { width: 96px; }
.tools { display: grid; grid-template-columns: repeat(3, 20px); grid-auto-rows: 38px; gap: 0 8px; padding: 7px 0 0 9px; place-items: center; }
.letter { font: bold 26px/22px "Liberation Serif", serif; color: #1d3c63; }
.g-brush { width: 62px; }
.g-brush .g-body { padding-left: 4px; }
.g-shapes { width: 203px; }
.g-shapes .g-body { padding: 3px 0 0 5px; gap: 6px; }
.gallery { display: flex; width: 116px; height: 76px; border: 1px solid #d5dae0; background: #fafcfd; }
.shapes { width: 98px; height: 74px; }
.g-scroll { flex: 1; border-left: 1px solid #d5dae0; display: flex; flex-direction: column; justify-content: space-around; align-items: center; }
.g-scroll svg { width: 6px; height: 8px; }
.opts { padding: 0; }
.opts button { display: flex; align-items: center; gap: 3px; color: #999; }
.opts .dn { fill: #aaa; margin: 0 0 0 3px; }
.g-size { width: 62px; }
.g-size .g-body { padding-left: 4px; }
.g-colors { width: 430px; }
.g-colors .g-body { padding-left: 4px; }
.g-colors .pressed { height: 91px; }
.chip { display: block; border: 1px solid #888; }
.chip.big { width: 40px; height: 40px; background: #000; box-shadow: inset 0 0 0 2px #fff; }
.chip.small { width: 30px; height: 30px; margin: 5px 0; background: #fff; }
.chip.rainbow { width: 34px; height: 38px; margin: 1px 0; background: linear-gradient(90deg, #e33, #fb3 20%, #3c3 45%, #3cc 60%, #33c, #c3c); box-shadow: inset 0 0 0 2px #fff; }
.palette { display: grid; grid-template-columns: repeat(10, 25px); grid-auto-rows: 25px; gap: 2px; margin: 1px 0 0 1px; }
.palette button { border: 1px solid #999; box-shadow: inset 0 0 0 1px #fff; }
.palette .empty { background: #f4f6f9; box-shadow: none; }
.k { background: #000; } .gray50 { background: #7f7f7f; } .darkred { background: #880015; } .red { background: #ed1c24; } .orange { background: #ff7f27; }
.yellow { background: #fff200; } .green { background: #22b14c; } .turq { background: #00a2e8; } .indigo { background: #3f48cc; } .purple { background: #a349a4; }
.w { background: #fff; } .gray25 { background: #c3c3c3; } .brown { background: #b97a57; } .rose { background: #ffaec9; } .gold { background: #ffc90e; }
.cream { background: #efe4b0; } .lime { background: #b5e61d; } .sky { background: #99d9ea; } .steel { background: #7092be; } .lavender { background: #c8bfe7; }

.work { flex: 1; min-height: 0; padding-left: 5px; display: flex; flex-direction: column; background: linear-gradient(#c8d0e3, #dbe6f0); }
.canvas { flex: 1; min-height: 0; background: #fdfdfd; overflow: hidden; }
.ink { width: 1003px; height: 601px; fill: none; stroke: #000; stroke-linecap: round; stroke-linejoin: round; }
.ink path { stroke-width: 3px; vector-effect: non-scaling-stroke; }
.ink .spot { fill: #fbf94a; fill-opacity: .6; stroke: none; }
.ink .cross { stroke-width: 1px; stroke-dasharray: 1 3; stroke-linecap: butt; }
.c-shadow { height: 7px; flex: none; margin-left: 9px; background: linear-gradient(#abb9cf, #ccd8e6); display: flex; justify-content: flex-end; padding-right: 50px; }
.c-shadow i { width: 5px; height: 5px; border: 1px solid #444; background: #fff; }
.p-scroll { height: 20px; flex: none; display: flex; align-items: center; gap: 8px; padding-left: 5px; background: #f0f0f0; }
.p-scroll svg { width: 8px; height: 12px; }
.p-scroll i { width: 64%; height: 19px; background: #cbcbcb; }
.p-status { height: 33px; flex: none; display: flex; background: #f0f0f0; border-top: 1px solid #dcdcdc; color: #111; font-family: "Open Sans", "Noto Sans CJK SC", sans-serif; white-space: nowrap; }
.st { flex: none; width: 222px; display: flex; align-items: center; gap: 5px; padding-left: 4px; border-right: 1px solid #d5d5d5; }
.st:nth-child(4) { width: 216px; }
.zoom { width: 220px; padding-left: 18px; gap: 8px; border: 0; }
.slider { width: 130px; margin: 0 0 0 6px; height: 20px; appearance: none; background: none; }
.slider::-webkit-slider-runnable-track { height: 4px; border: 1px solid #ccc; background: #e5e5e5; }
.slider::-webkit-slider-thumb { appearance: none; width: 8px; height: 16px; margin-top: -7px; background: #ddd; border: 1px solid #888; }
```
